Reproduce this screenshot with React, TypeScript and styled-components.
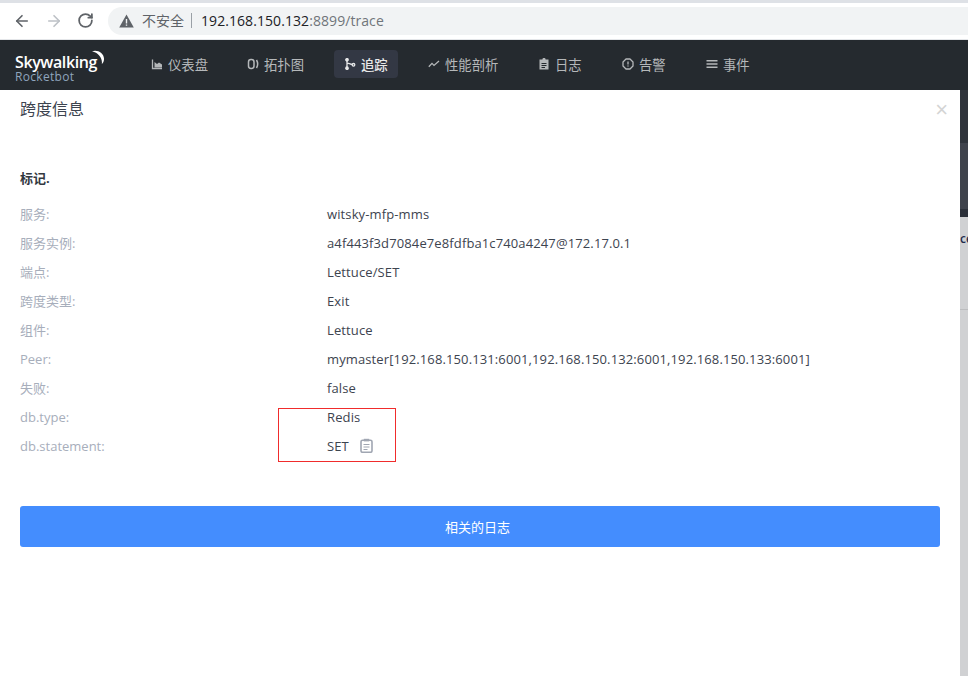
import styled, { createGlobalStyle } from "styled-components";
import { ArrowLeft, ArrowRight, RotateCw } from "lucide-react";
import type { ReactNode } from "react";

const cjk = `"Open Sans", "Noto Sans CJK SC", sans-serif`;

const GlobalStyle = createGlobalStyle`
  html, body {
    margin: 0;
    padding: 0;
    height: 676px;
    overflow: hidden;
    background: #fff;
    font-family: ${cjk};
  }
  * { box-sizing: border-box; }
`;

const Page = styled.div`
  width: 968px;
  height: 676px;
  position: relative;
  overflow: hidden;
  display: flex;
  flex-direction: column;
`;

const TabStrip = styled.div`
  height: 3px;
  background: #dee1e6;
`;

const Toolbar = styled.div`
  height: 37px;
  background: #fff;
  display: flex;
  align-items: center;
  padding: 0 0 1px 13px;
  border-bottom: 1px solid #e4e6e9;
`;

const NavIcon = styled.span<{ $color: string; $gap: number }>`
  display: flex;
  width: 18px;
  color: ${(p) => p.$color};
  margin-right: ${(p) => p.$gap}px;
`;

const AddressBar = styled.div`
  flex: 1;
  height: 28px;
  background: #f1f3f4;
  border-radius: 14px 0 0 14px;
  display: flex;
  align-items: center;
  padding-left: 11px;
  font-size: 14px;
`;

const Insecure = styled.span`
  color: #5f6368;
  font-size: 14px;
  margin-left: 8px;
  padding-right: 7px;
  border-right: 1px solid #9aa0a6;
  line-height: 15px;
`;

const Url = styled.span`
  color: #70757a;
  margin-left: 9px;
  letter-spacing: 0.07px;
  b {
    font-weight: 400;
    color: #202124;
  }
`;

const Main = styled.div`
  flex: 1;
  min-height: 0;
  display: flex;
  flex-direction: column;
`;

const TopNav = styled.nav`
  height: 50px;
  flex: none;
  background: #252a2f;
  display: flex;
  align-items: center;
  padding: 0 0 2px 15px;
`;

const Brand = styled.div`
  width: 136px;
  height: 36px;
  padding-top: 7px;
  position: relative;
  font-family: "Open Sans", sans-serif;
`;

const BrandName = styled.div`
  color: #fff;
  font-size: 16px;
  font-weight: 600;
  line-height: 18px;
  letter-spacing: -0.4px;
`;

const BrandSub = styled.div`
  color: #8fa5bd;
  font-size: 12px;
  line-height: 11px;
  letter-spacing: 0.3px;
`;

const Moon = styled.svg`
  position: absolute;
  left: 75px;
  top: 4px;
`;

const NavItem = styled.div<{ $active?: boolean; $width: number }>`
  width: ${(p) => p.$width}px;
  height: 28px;
  margin-right: ${(p) => (p.$active ? 30 : 0)}px;
  border-radius: 4px;
  background: ${(p) => (p.$active ? "#333844" : "transparent")};
  color: ${(p) => (p.$active ? "#e8e9ea" : "#b5b8ba")};
  display: flex;
  align-items: center;
  gap: 5px;
  padding-left: ${(p) => (p.$active ? 10 : 0)}px;
  font-size: 13.33px;
  font-weight: ${(p) => (p.$active ? 500 : 400)};
  font-family: "Noto Sans CJK SC", sans-serif;
  svg { flex: none; }
`;

const Content = styled.div`
  flex: 1;
  min-height: 0;
  display: flex;
`;

const Modal = styled.section`
  width: 960px;
  background: #fff;
  padding: 9px 20px 0;
  position: relative;
`;

const ModalTitle = styled.h2`
  margin: 0;
  font-size: 16px;
  line-height: 20px;
  font-weight: 400;
  color: #3d444f;
`;

const CloseMark = styled.span`
  position: absolute;
  right: 12px;
  top: 10px;
  font-size: 22px;
  line-height: 20px;
  color: #d4d4d4;
  font-family: "Liberation Sans", sans-serif;
`;

const SectionTitle = styled.h3`
  margin: 49px 0 0;
  font-size: 13px;
  line-height: 20px;
  font-weight: 700;
  color: #33383f;
`;

const Rows = styled.div`
  margin-top: 11px;
`;

const Row = styled.div`
  display: flex;
  height: 29px;
  align-items: center;
  font-size: 13px;
`;

const Label = styled.div`
  width: 307px;
  color: #a7aebb;
`;

const Value = styled.div`
  color: #3d444f;
  display: flex;
  align-items: center;
  gap: 11px;
  letter-spacing: 0.12px;
`;

const LogButton = styled.button`
  display: block;
  width: 920px;
  height: 41px;
  margin-top: 46px;
  padding: 0 5px 0 0;
  border: 0;
  border-radius: 3px;
  background: #448dfe;
  color: #fff;
  font-size: 13px;
  font-family: inherit;
`;

const Backdrop = styled.aside`
  width: 8px;
  display: flex;
  flex-direction: column;
  background: #d0d1d3;
  overflow: hidden;
`;

const Shade = styled.div<{ $h: number; $bg: string }>`
  flex: none;
  height: ${(p) => p.$h}px;
  background: ${(p) => p.$bg};
`;

const ClippedText = styled.div`
  height: 93px;
  padding-top: 14px;
  border-bottom: 1px solid #bcbdbf;
  color: #1c2a4c;
  font-size: 12px;
  font-weight: 600;
  line-height: 16px;
  white-space: nowrap;
`;

const Annotation = styled.div`
  position: absolute;
  left: 278px;
  top: 408px;
  width: 118px;
  height: 54px;
  border: 1px solid #f02c2c;
`;

const Glyph = ({ children }: { children: ReactNode }) => (
  <svg width="12" height="12" viewBox="0 0 12 12" fill="none" stroke="currentColor" strokeWidth="1.3">
    {children}
  </svg>
);

const navItems = [
  {
    label: "仪表盘",
    width: 96,
    icon: (
      <Glyph>
        <path d="M1.5 1.500v9H11" />
        <path d="M3.500 9.500V4l2.500 2 2-1.500 3 2v3z" fill="currentColor" stroke="none" />
      </Glyph>
    ),
  },
  {
    label: "拓扑图",
    width: 87,
    icon: (
      <Glyph>
        <rect x="1.5" y="1.5" width="5.500" height="9" rx="2.4" strokeWidth="1.5" />
        <path d="M9.500 2c1.400 2.400 1.400 5.600 0 8" strokeWidth="1.5" />
      </Glyph>
    ),
  },
  {
    label: "追踪",
    width: 64,
    active: true,
    icon: (
      <Glyph>
        <path d="M3 2v8.500M3 5.200c2 0 3 .8 5 1.300" />
        <circle cx="3" cy="1.800" r="1.200" fill="currentColor" />
        <circle cx="3" cy="10.200" r="1.200" fill="currentColor" />
        <circle cx="9.500" cy="6.800" r="1.300" />
      </Glyph>
    ),
  },
  {
    label: "性能剖析",
    width: 110,
    icon: (
      <Glyph>
        <path d="M.8 8.800 4 5.400l2 2L11 3" />
      </Glyph>
    ),
  },
  {
    label: "日志",
    width: 84,
    icon: (
      <svg width="12" height="12" viewBox="0 0 12 12">
        <path
          fill="currentColor"
          fillRule="evenodd"
          d="M1.500 1.500h2.900a1.600 1.600 0 0 1 3.200 0h2.900v10h-9zM3.500 5h5v1h-5zm0 2h5v1h-5zm0 2h3.500v1H3.500z"
        />
      </svg>
    ),
  },
  {
    label: "告警",
    width: 84,
    icon: (
      <Glyph>
        <path d="M4 1h4l3 3v4l-3 3H4L1 8V4z" strokeLinejoin="round" />
        <path d="M6 3.500v3M6 7.600v1" />
      </Glyph>
    ),
  },
  {
    label: "事件",
    width: 60,
    icon: (
      <Glyph>
        <path d="M.5 2.700h11M.5 6h11M.5 9.300h11" strokeWidth="1.600" />
      </Glyph>
    ),
  },
];

const tags: { label: string; value: string; copy?: boolean }[] = [
  { label: "服务:", value: "witsky-mfp-mms" },
  { label: "服务实例:", value: "a4f443f3d7084e7e8fdfba1c740a4247@172.17.0.1" },
  { label: "端点:", value: "Lettuce/SET" },
  { label: "跨度类型:", value: "Exit" },
  { label: "组件:", value: "Lettuce" },
  { label: "Peer:", value: "mymaster[192.168.150.131:6001,192.168.150.132:6001,192.168.150.133:6001]" },
  { label: "失败:", value: "false" },
  { label: "db.type:", value: "Redis" },
  { label: "db.statement:", value: "SET", copy: true },
];

const App = () => {
  return (
    <Page>
      <GlobalStyle />
      <TabStrip />
      <Toolbar>
        <NavIcon $color="#5f6368" $gap={14}>
          <ArrowLeft size={18} strokeWidth={2.2} />
        </NavIcon>
        <NavIcon $color="#bdc1c6" $gap={14}>
          <ArrowRight size={18} strokeWidth={2.2} />
        </NavIcon>
        <NavIcon $color="#5f6368" $gap={13}>
          <RotateCw size={17} strokeWidth={2.5} />
        </NavIcon>
        <AddressBar>
          <svg width="15" height="14" viewBox="0 0 15 14">
            <path
              fill="#5f6368"
              fillRule="evenodd"
              d="M7.5 0.5 14.8 13.5H.2zM6.8 5v4.4h1.4V5zm0 5.4v1.4h1.4v-1.4z"
            />
          </svg>
          <Insecure>不安全</Insecure>
          <Url>
            <b>192.168.150.132</b>:8899/trace
          </Url>
        </AddressBar>
      </Toolbar>
      <Main>
        <TopNav>
          <Brand>
            <BrandName>Skywalking</BrandName>
            <BrandSub>Rocketbot</BrandSub>
            <Moon width="15" height="15" viewBox="0 0 15 15">
              <path fill="#fff" d="M2 1.200C7.500-.8 14.500 3 14 9.500c-.2 2-1 3.500-2.200 4.500 1-5.500-3.300-11.300-9.800-12.800z" />
            </Moon>
          </Brand>
          {navItems.map((item) => (
            <NavItem key={item.label} $active={item.active} $width={item.width}>
              {item.icon}
              {item.label}
            </NavItem>
          ))}
        </TopNav>
        <Content>
          <Modal>
            <ModalTitle>跨度信息</ModalTitle>
            <CloseMark>×</CloseMark>
            <SectionTitle>标记.</SectionTitle>
            <Rows>
              {tags.map((tag) => (
                <Row key={tag.label}>
                  <Label>{tag.label}</Label>
                  <Value>
                    {tag.value}
                    {tag.copy && (
                      <svg width="13" height="15" viewBox="0 0 13 15" fill="none" stroke="#a0a6b2" strokeWidth="1.600">
                        <rect x="1" y="2.300" width="11" height="12" rx="1.500" />
                        <rect x="3.800" y="0.800" width="5.400" height="2.600" fill="#a0a6b2" stroke="none" />
                        <path d="M3.500 6.500h6M3.500 9h6M3.500 11.500h4" strokeWidth="1" />
                      </svg>
                    )}
                  </Value>
                </Row>
              ))}
            </Rows>
            <LogButton>相关的日志</LogButton>
          </Modal>
          <Backdrop>
            <Shade $h={53} $bg="#2f343b" />
            <Shade $h={66} $bg="#3f434c" />
            <Shade $h={8} $bg="#2b3039" />
            <ClippedText>ce</ClippedText>
          </Backdrop>
        </Content>
      </Main>
      <Annotation />
    </Page>
  );
};

export default App;
